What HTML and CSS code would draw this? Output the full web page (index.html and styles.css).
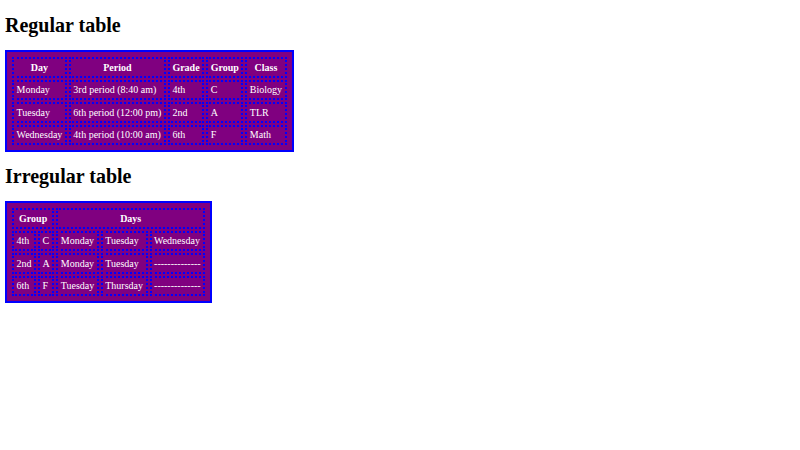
FILE: index.html
```html
<!DOCTYPE html>
<html>
<head>
<meta charset="utf-8">
<title>Tables</title>
<link rel="stylesheet" href="styles.css">
</head>
<body>
<h1 class="title">Regular table</h1>
<table class="grid">
  <tr><th>Day</th><th>Period</th><th>Grade</th><th>Group</th><th>Class</th></tr>
  <tr><td>Monday</td><td>3rd period (8:40 am)</td><td>4th</td><td>C</td><td>Biology</td></tr>
  <tr><td>Tuesday</td><td>6th period (12:00 pm)</td><td>2nd</td><td>A</td><td>TLR</td></tr>
  <tr><td>Wednesday</td><td>4th period (10:00 am)</td><td>6th</td><td>F</td><td>Math</td></tr>
</table>
<h1 class="title">Irregular table</h1>
<table class="grid">
  <tr><th colspan="2">Group</th><th colspan="3">Days</th></tr>
  <tr><td>4th</td><td>C</td><td>Monday</td><td>Tuesday</td><td>Wednesday</td></tr>
  <tr><td>2nd</td><td>A</td><td>Monday</td><td>Tuesday</td><td>--------------</td></tr>
  <tr><td>6th</td><td>F</td><td>Tuesday</td><td>Thursday</td><td>--------------</td></tr>
</table>
</body>
</html>
```
FILE: styles.css
```css
html {
  background: #ffffff;
}
body {
  margin: 5px;
  font-family: "Liberation Serif", "Times New Roman", serif;
  font-size: 10px;
  color: #000000;
}
.title {
  font-size: 20px;
  font-weight: bold;
  margin: 13px 0;
}
.title:first-child {
  margin-top: 9px;
}
.grid {
  background: #800080;
  color: #ffffff;
  border: 2px solid #0000ff;
  padding: 3px;
  border-spacing: 2px;
}
.grid th,
.grid td {
  border: 2px dotted #0000ff;
  padding: 2.5px;
  font-size: 10px;
  line-height: 11.5px;
}
.grid th {
  font-weight: bold;
  text-align: center;
}
.grid td {
  text-align: left;
}
```
